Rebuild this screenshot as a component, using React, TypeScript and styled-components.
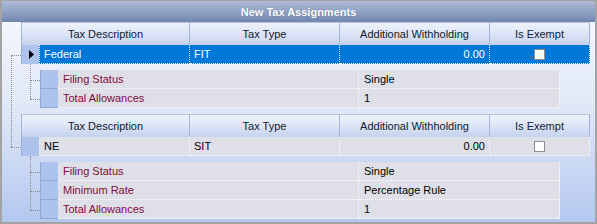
import React from 'react';
import styled, { createGlobalStyle, css } from 'styled-components';

const Global = createGlobalStyle`
  html, body { margin: 0; padding: 0; background: #ffffff; }
  body { font-family: "Liberation Sans", Arial, sans-serif; font-size: 11px; }
`;

const Frame = styled.div`
  width: 597px;
  height: 224px;
  box-sizing: border-box;
  border-style: solid;
  border-color: #a3a3a3;
  border-width: 1px 2px 2px 2px;
  display: flex;
  flex-direction: column;
  overflow: hidden;
`;

const TitleBar = styled.div`
  height: 21px;
  flex: none;
  background: linear-gradient(#afbcd8, #8e9fc4 55%, #7185af);
  color: #ffffff;
  font-weight: bold;
  font-size: 11px;
  display: flex;
  align-items: center;
  justify-content: center;
  text-shadow: 0 0 1px rgba(40, 55, 90, 0.5);
`;

const Body = styled.div`
  flex: 1;
  background: linear-gradient(#f3f6fc, #dfe7f7 45%, #b3c7ee);
  padding-left: 19px;
  display: flex;
  flex-direction: column;
  gap: 6px;
`;

const Band = styled.div`
  display: flex;
  flex-direction: column;
`;

const HeaderRow = styled.div`
  display: grid;
  grid-template-columns: 169px 150px 150px 100px;
  height: 23px;
  width: 569px;
`;

const HeaderCell = styled.div<{ $first?: boolean }>`
  box-sizing: border-box;
  border-right: 1px solid #a4b5da;
  border-top: 1px solid #b6c4e2;
  ${(p) => p.$first && css`border-left: 1px solid #a4b5da;`}
  background: linear-gradient(#eef2fb, #dce4f6 50%, #c5d3ef);
  color: #111b30;
  display: flex;
  align-items: center;
  justify-content: center;
`;

const DataRow = styled.div<{ $linkDown?: number }>`
  position: relative;
  display: grid;
  grid-template-columns: 18px 151px 150px 150px 100px;
  height: 19px;
  width: 569px;
  &::after {
    content: '';
    position: absolute;
    left: -10px;
    top: 10px;
    width: 10px;
    border-top: 1px dotted #8a8a8a;
  }
  ${(p) =>
    p.$linkDown &&
    css`
      &::before {
        content: '';
        position: absolute;
        left: -10px;
        top: 10px;
        height: ${p.$linkDown}px;
        border-left: 1px dotted #8a8a8a;
      }
    `}
`;

const RowHeader = styled.div`
  box-sizing: border-box;
  background: #adc3ec;
  border-left: 1px solid #98aedb;
  display: flex;
  align-items: center;
  justify-content: center;
  padding-left: 2px;
`;

const Cell = styled.div<{ $selected?: boolean; $first?: boolean; $align?: 'left' | 'right' | 'center' }>`
  box-sizing: border-box;
  display: flex;
  align-items: center;
  padding: 0 4px;
  white-space: nowrap;
  overflow: hidden;
  justify-content: ${(p) => (p.$align === 'right' ? 'flex-end' : p.$align === 'center' ? 'center' : 'flex-start')};
  background: ${(p) => (p.$selected ? '#0078d7' : '#dfdfe8')};
  color: ${(p) => (p.$selected ? '#ffffff' : '#000000')};
  border-right: 1px dotted #ffffff;
  border-bottom: 1px dotted #ffffff;
  ${(p) => p.$first && css`border-left: 1px dotted ${p.$selected ? '#ffffff' : '#f0f0f4'}; padding-left: 4px;`}
`;

const CheckBox = styled.span`
  display: inline-block;
  width: 11px;
  height: 11px;
  box-sizing: border-box;
  background: #ffffff;
  border: 1px solid #8e8e8e;
`;

const ChildBand = styled.div`
  position: relative;
  margin-top: 6px;
  margin-left: 19px;
  width: 520px;
  display: flex;
  flex-direction: column;
  &::before {
    content: '';
    position: absolute;
    left: -10px;
    top: -6px;
    bottom: 9px;
    border-left: 1px dotted #8a8a8a;
  }
`;

const ChildRow = styled.div`
  position: relative;
  display: grid;
  grid-template-columns: 18px 301px 201px;
  height: 19px;
  &::before {
    content: '';
    position: absolute;
    left: -10px;
    top: 10px;
    width: 10px;
    border-top: 1px dotted #8a8a8a;
  }
`;

const ChildRowHeader = styled.div`
  box-sizing: border-box;
  background: #adc3ec;
  border-left: 1px solid #91a8d8;
  border-bottom: 1px solid #91a8d8;
`;

const ChildCell = styled.div<{ $label?: boolean }>`
  box-sizing: border-box;
  display: flex;
  align-items: center;
  padding: 0 4px 0 5px;
  background: #dfdfe8;
  color: ${(p) => (p.$label ? '#7f0c3a' : '#000000')};
  border-right: 1px dotted #ffffff;
  border-bottom: 1px dotted #ffffff;
  white-space: nowrap;
`;

const Arrow = () => (
  <svg width="5" height="9" viewBox="0 0 5 9">
    <polygon points="0,0 5,4.5 0,9" fill="#000000" />
  </svg>
);

type Assignment = {
  description: string;
  type: string;
  amount: string;
  selected: boolean;
  details: { label: string; value: string }[];
};

const data: Assignment[] = [
  {
    description: 'Federal',
    type: 'FIT',
    amount: '0.00',
    selected: true,
    details: [
      { label: 'Filing Status', value: 'Single' },
      { label: 'Total Allowances', value: '1' },
    ],
  },
  {
    description: 'NE',
    type: 'SIT',
    amount: '0.00',
    selected: false,
    details: [
      { label: 'Filing Status', value: 'Single' },
      { label: 'Minimum Rate', value: 'Percentage Rule' },
      { label: 'Total Allowances', value: '1' },
    ],
  },
];

export default function App() {
  return (
    <>
      <Global />
      <Frame>
        <TitleBar>New Tax Assignments</TitleBar>
        <Body>
          {data.map((a, i) => {
            const hasNext = i < data.length - 1;
            const linkDown = hasNext ? 19 + 6 + a.details.length * 19 + 6 + 23 : undefined;
            return (
              <Band key={a.description}>
                <HeaderRow>
                  <HeaderCell $first>Tax Description</HeaderCell>
                  <HeaderCell>Tax Type</HeaderCell>
                  <HeaderCell>Additional Withholding</HeaderCell>
                  <HeaderCell>Is Exempt</HeaderCell>
                </HeaderRow>
                <DataRow $linkDown={linkDown}>
                  <RowHeader>{a.selected && <Arrow />}</RowHeader>
                  <Cell $first $selected={a.selected}>{a.description}</Cell>
                  <Cell $selected={a.selected}>{a.type}</Cell>
                  <Cell $selected={a.selected} $align="right">{a.amount}</Cell>
                  <Cell $selected={a.selected} $align="center">
                    <CheckBox />
                  </Cell>
                </DataRow>
                <ChildBand>
                  {a.details.map((d) => (
                    <ChildRow key={d.label}>
                      <ChildRowHeader />
                      <ChildCell $label>{d.label}</ChildCell>
                      <ChildCell>{d.value}</ChildCell>
                    </ChildRow>
                  ))}
                </ChildBand>
              </Band>
            );
          })}
        </Body>
      </Frame>
    </>
  );
}
